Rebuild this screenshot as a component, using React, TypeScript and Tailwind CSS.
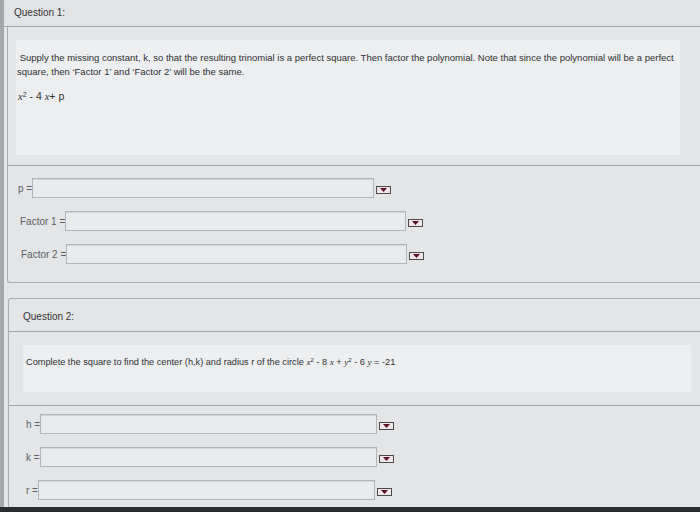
import React from 'react';

const font = { fontFamily: '"Liberation Sans", Arial, sans-serif' };

function DropIcon() {
  return (
    <span className="ml-[2px] mt-[3px] flex h-[8px] w-[15px] items-center justify-center border border-[#4a4a4a] bg-[#f3e6ea]">
      <svg width="7" height="4" viewBox="0 0 7 4">
        <path d="M0 0 L7 0 L3.5 4 Z" fill="#5a1020" />
      </svg>
    </span>
  );
}

function AnswerRow({ label, width }: { label: string; width: number }) {
  return (
    <div className="flex h-[20px] items-center">
      <span className="text-[10px] text-[#5e6062] whitespace-nowrap">{label}</span>
      <div
        className="h-[20px] border border-[#b3b5b7] bg-[#e9ebed] shadow-[inset_0_1px_0_#d4d6d8]"
        style={{ width }}
      />
      <DropIcon />
    </div>
  );
}

function Var({ children }: { children: React.ReactNode }) {
  return <i style={{ fontFamily: '"Liberation Serif", serif' }}>{children}</i>;
}

export default function App() {
  return (
    <div className="flex h-[512px] w-[700px] flex-col overflow-hidden bg-[#e3e5e7] text-[#2f3133]" style={font}>
      <div className="flex flex-1">
        <div className="w-[4px] bg-[#a5a7a9]" />
        <div className="flex flex-1 flex-col">
          {/* Question 1 */}
          <div className="flex h-[27px] items-center border-b border-[#a2a4a6] bg-[#e1e3e5] pb-[1px] pl-[10px] text-[10px] text-[#333]">
            Question 1:
          </div>
          <div className="ml-[3px] rounded-bl-[3px] border-b border-l border-[#a9abad]">
            <div className="border-b border-[#a2a4a6] pb-[10px] pl-[8px] pt-[13px]">
              <div className="h-[115px] w-[664px] bg-[#eceef0] pl-[1px] pt-[11px]">
                <p className="text-[9.5px] leading-[14px] text-[#2e3032]">
                  &nbsp;Supply the missing constant, k, so that the resulting trinomial is a perfect square. Then factor the polynomial. Note that since the polynomial will be a perfect square, then &lsquo;Factor 1&rsquo; and &lsquo;Factor 2&rsquo; will be the same.
                </p>
                <p className="mt-[10px] pl-[1px] text-[10.5px] leading-[14px] text-[#333]">
                  <Var>x</Var>
                  <sup className="text-[7px]">2</sup> - 4 <Var>x</Var>+ p
                </p>
              </div>
            </div>
            <div className="flex flex-col gap-[13px] pb-[18px] pl-[10px] pt-[12px]">
              <AnswerRow label="p =" width={342} />
              <div className="pl-[2px]">
                <AnswerRow label="Factor 1 =" width={341} />
              </div>
              <div className="pl-[3px]">
                <AnswerRow label="Factor 2 =" width={341} />
              </div>
            </div>
          </div>

          {/* Question 2 */}
          <div className="ml-[4px] mt-[15px] flex-1 rounded-tl-[3px] border-l border-t border-[#a9abad]">
            <div className="flex h-[33px] items-center border-b border-[#a2a4a6] pl-[14px] pt-[2px] text-[10px] text-[#333]">
              Question 2:
            </div>
            <div className="border-b border-[#a2a4a6] pb-[13px] pl-[14px] pt-[13px]">
              <div className="h-[47px] w-[668px] bg-[#eceef0] pl-[3px] pt-[10px]">
                <p className="text-[9.2px] leading-[14px] text-[#2e3032]">
                  Complete the square to find the center (h,k) and radius r of the circle <Var>x</Var>
                  <sup className="text-[6px]">2</sup> - 8 <Var>x</Var> + <Var>y</Var>
                  <sup className="text-[6px]">2</sup> - 6 <Var>y</Var> = -21
                </p>
              </div>
            </div>
            <div className="flex flex-col gap-[13px] pl-[17px] pt-[8px]">
              <AnswerRow label="h =" width={337} />
              <AnswerRow label="k =" width={337} />
              <div className="-ml-[1px] pl-[1px]">
                <AnswerRow label="r =" width={337} />
              </div>
            </div>
          </div>
        </div>
      </div>
      <div className="h-[5px] bg-[#2c2d2f]" />
    </div>
  );
}
